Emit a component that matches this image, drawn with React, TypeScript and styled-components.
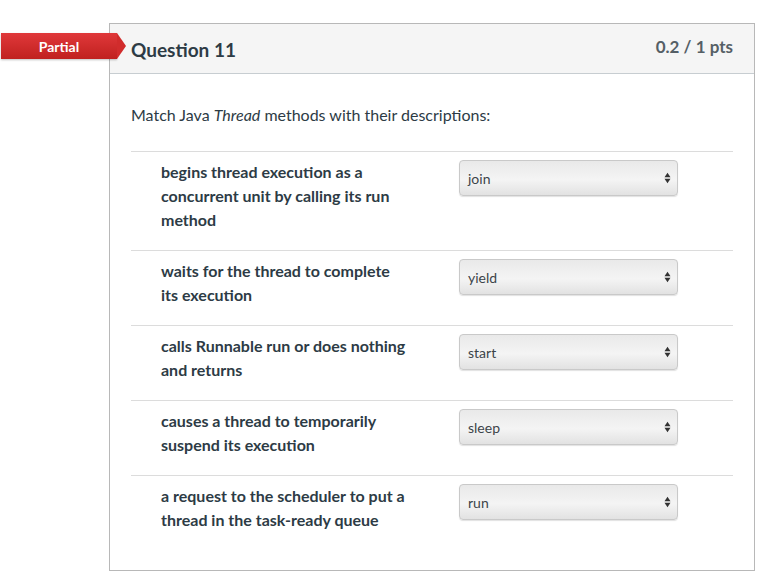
import styled, { createGlobalStyle } from "styled-components";

const GlobalStyle = createGlobalStyle`
  html, body {
    margin: 0;
    padding: 0;
    background: #ffffff;
    font-family: Lato, "Open Sans", sans-serif;
    color: #2d3b45;
  }
`;

const rows = [
  {
    text: "begins thread execution as a concurrent unit by calling its run method",
    value: "join",
  },
  { text: "waits for the thread to complete its execution", value: "yield" },
  { text: "calls Runnable run or does nothing and returns", value: "start" },
  { text: "causes a thread to temporarily suspend its execution", value: "sleep" },
  {
    text: "a request to the scheduler to put a thread in the task-ready queue",
    value: "run",
  },
];

export default function App() {
  return (
    <>
      <GlobalStyle />
      <Page>
        <Card>
          <Badge>Partial</Badge>
          <Header>
            <Title>Question 11</Title>
            <Points>0.2 / 1 pts</Points>
          </Header>
          <Body>
            <Prompt>
              Match Java <em>Thread</em> methods with their descriptions:
            </Prompt>
            <List>
              {rows.map((r) => (
                <Row key={r.value}>
                  <Desc>{r.text}</Desc>
                  <Select>
                    <span>{r.value}</span>
                    <Arrows viewBox="0 0 8 14">
                      <path d="M4 1 L7.5 6 L0.5 6 Z" />
                      <path d="M4 13 L7.5 8 L0.5 8 Z" />
                    </Arrows>
                  </Select>
                </Row>
              ))}
            </List>
          </Body>
        </Card>
      </Page>
    </>
  );
}

const Page = styled.div`
  padding: 23px 13px 10px 109px;
  height: 581px;
  box-sizing: border-box;
`;

const Card = styled.div`
  position: relative;
  width: 646px;
  height: 548px;
  box-sizing: border-box;
  border: 1px solid #b8b8b8;
`;

const Badge = styled.div`
  position: absolute;
  left: -109px;
  top: 9px;
  width: 116px;
  height: 26px;
  display: flex;
  align-items: center;
  justify-content: center;
  color: #ffffff;
  font-size: 14px;
  font-weight: 700;
  background: linear-gradient(#e0383a, #c0211f);
  box-shadow: 0 1px 2px rgba(0, 0, 0, 0.25);
  &::after {
    content: "";
    position: absolute;
    right: -9px;
    top: 0;
    border-top: 13px solid transparent;
    border-bottom: 13px solid transparent;
    border-left: 9px solid #d12c2c;
  }
`;

const Header = styled.div`
  height: 49px;
  display: flex;
  justify-content: space-between;
  align-items: flex-start;
  padding: 0 21px;
  background: #f5f5f5;
  border-bottom: 1px solid #c7cdd1;
`;

const Title = styled.h2`
  margin: 14px 0 0;
  font-size: 19px;
  font-weight: 700;
  color: #2d3b45;
`;

const Points = styled.div`
  margin-top: 12px;
  font-size: 17px;
  font-weight: 700;
  color: #555f66;
`;

const Body = styled.div`
  padding: 30px 21px 0;
`;

const Prompt = styled.p`
  margin: 0 0 25px;
  font-size: 16px;
  line-height: 22px;
  color: #2d3b45;
`;

const List = styled.div`
  border-top: 1px solid #dcdcdc;
`;

const Row = styled.div`
  display: flex;
  align-items: flex-start;
  padding: 8px 0 18px 30px;
  border-bottom: 1px solid #dcdcdc;
  &:last-child {
    border-bottom: none;
  }
`;

const Desc = styled.div`
  width: 246px;
  font-size: 16px;
  font-weight: 700;
  line-height: 24px;
  color: #2d3b45;
`;

const Select = styled.div`
  margin: 0 0 0 52px;
  width: 219px;
  height: 36px;
  box-sizing: border-box;
  display: flex;
  align-items: center;
  justify-content: space-between;
  padding: 0 6px 0 8px;
  border: 1px solid #c9c9c9;
  border-radius: 4px;
  background: linear-gradient(#e9e9e9, #f4f4f4 55%, #e2e2e2);
  box-shadow: 0 1px 1px rgba(0, 0, 0, 0.12);
  font-size: 14px;
  color: #3c4449;
`;

const Arrows = styled.svg`
  width: 7px;
  height: 12px;
  fill: #333333;
`;
